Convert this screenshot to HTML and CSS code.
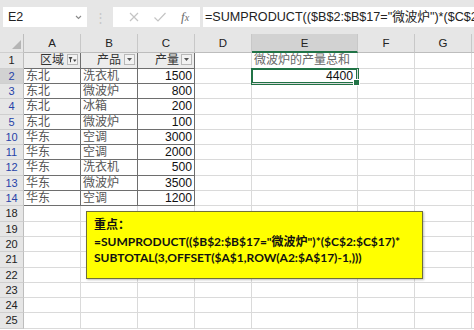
FILE: index.html
```html
<!DOCTYPE html>
<html lang="zh">
<head>
  <meta charset="UTF-8">
  <title>SUMPRODUCT</title>
  <link rel="stylesheet" href="styles.css">
</head>
<body>

  <div class="app">
    <!-- formula bar -->
    <div class="formula-bar">
      <div class="name-box">
        <span>E2</span>
        <svg class="caret" width="7" height="5" viewBox="0 0 7 5"><path d="M1 1 L3.5 3.5 L6 1" fill="none" stroke="#8a8a8a" stroke-width="1.1"/></svg>
      </div>
      <div class="dots">⋮</div>
      <div class="fx-buttons">
        <svg width="12" height="12" viewBox="0 0 12 12"><path d="M2 2 L10 10 M10 2 L2 10" stroke="#c4c4c4" stroke-width="1.2"/></svg>
        <svg width="14" height="12" viewBox="0 0 14 12"><path d="M1.5 6.5 L5 10 L12.5 2" fill="none" stroke="#c4c4c4" stroke-width="1.2"/></svg>
        <span class="fx"><i>f</i><i class="x">x</i></span>
      </div>
      <div class="formula">=SUMPRODUCT(($B$2:$B$17="微波炉")*($C$2:$C$17)*SUBTOTAL(3,OFFSET($A$1,ROW(A2:$A$17)-1,)))</div>
    </div>

    <!-- sheet -->
    <div class="sheet">
      <div class="row heads">
        <div class="rh corner"><svg width="9" height="9" viewBox="0 0 9 9"><path d="M9 0 L9 9 L0 9 Z" fill="#b5b5b5"/></svg></div>
        <div class="c">A</div>
        <div class="c">B</div>
        <div class="c">C</div>
        <div class="c">D</div>
        <div class="c wide active">E</div>
        <div class="c">F</div>
        <div class="c">G</div>
        <div class="c rest"></div>
      </div>

      <div class="row">
        <div class="rh">1</div>
        <div class="c tb th center">区域<span class="drop on"><svg width="9" height="8" viewBox="0 0 9 8"><path d="M0.5 1 L4.5 1 L3 3.5 L3 6.5 L2 6 L2 3.5 Z" fill="#444"/><path d="M5 3.5 L8.5 3.5 L6.75 6 Z" fill="#444"/></svg></span></div>
        <div class="c tb th center">产品<span class="drop"><svg width="5" height="3" viewBox="0 0 5 3"><path d="M0 0 L5 0 L2.5 3 Z" fill="#555"/></svg></span></div>
        <div class="c tb th right">产量<span class="drop"><svg width="5" height="3" viewBox="0 0 5 3"><path d="M0 0 L5 0 L2.5 3 Z" fill="#555"/></svg></span></div>
        <div class="c"></div>
        <div class="c wide note-title">微波炉的产量总和</div>
        <div class="c"></div>
        <div class="c"></div>
        <div class="c rest"></div>
      </div>

      <div class="row">
        <div class="rh hit active-row">2</div>
        <div class="c tb">东北</div>
        <div class="c tb">洗衣机</div>
        <div class="c tb num">1500</div>
        <div class="c"></div>
        <div class="c wide num sel">4400</div>
        <div class="c"></div>
        <div class="c"></div>
        <div class="c rest"></div>
      </div>

      <div class="row">
        <div class="rh hit">3</div>
        <div class="c tb">东北</div>
        <div class="c tb">微波炉</div>
        <div class="c tb num">800</div>
        <div class="c"></div><div class="c wide"></div><div class="c"></div><div class="c"></div><div class="c rest"></div>
      </div>

      <div class="row">
        <div class="rh hit">4</div>
        <div class="c tb">东北</div>
        <div class="c tb">冰箱</div>
        <div class="c tb num">200</div>
        <div class="c"></div><div class="c wide"></div><div class="c"></div><div class="c"></div><div class="c rest"></div>
      </div>

      <div class="row">
        <div class="rh hit">5</div>
        <div class="c tb">东北</div>
        <div class="c tb">微波炉</div>
        <div class="c tb num">100</div>
        <div class="c"></div><div class="c wide"></div><div class="c"></div><div class="c"></div><div class="c rest"></div>
      </div>

      <div class="row">
        <div class="rh hit">10</div>
        <div class="c tb">华东</div>
        <div class="c tb">空调</div>
        <div class="c tb num">3000</div>
        <div class="c"></div><div class="c wide"></div><div class="c"></div><div class="c"></div><div class="c rest"></div>
      </div>

      <div class="row">
        <div class="rh hit">11</div>
        <div class="c tb">华东</div>
        <div class="c tb">空调</div>
        <div class="c tb num">2000</div>
        <div class="c"></div><div class="c wide"></div><div class="c"></div><div class="c"></div><div class="c rest"></div>
      </div>

      <div class="row">
        <div class="rh hit">12</div>
        <div class="c tb">华东</div>
        <div class="c tb">洗衣机</div>
        <div class="c tb num">500</div>
        <div class="c"></div><div class="c wide"></div><div class="c"></div><div class="c"></div><div class="c rest"></div>
      </div>

      <div class="row">
        <div class="rh hit">13</div>
        <div class="c tb">华东</div>
        <div class="c tb">微波炉</div>
        <div class="c tb num">3500</div>
        <div class="c"></div><div class="c wide"></div><div class="c"></div><div class="c"></div><div class="c rest"></div>
      </div>

      <div class="row">
        <div class="rh hit">14</div>
        <div class="c tb">华东</div>
        <div class="c tb">空调</div>
        <div class="c tb num">1200</div>
        <div class="c"></div><div class="c wide"></div><div class="c"></div><div class="c"></div><div class="c rest"></div>
      </div>

      <div class="row"><div class="rh">18</div><div class="c"></div><div class="c"></div><div class="c"></div><div class="c"></div><div class="c wide"></div><div class="c"></div><div class="c"></div><div class="c rest"></div></div>
      <div class="row"><div class="rh">19</div><div class="c"></div><div class="c"></div><div class="c"></div><div class="c"></div><div class="c wide"></div><div class="c"></div><div class="c"></div><div class="c rest"></div></div>
      <div class="row"><div class="rh">20</div><div class="c"></div><div class="c"></div><div class="c"></div><div class="c"></div><div class="c wide"></div><div class="c"></div><div class="c"></div><div class="c rest"></div></div>
      <div class="row"><div class="rh">21</div><div class="c"></div><div class="c"></div><div class="c"></div><div class="c"></div><div class="c wide"></div><div class="c"></div><div class="c"></div><div class="c rest"></div></div>
      <div class="row"><div class="rh">22</div><div class="c"></div><div class="c"></div><div class="c"></div><div class="c"></div><div class="c wide"></div><div class="c"></div><div class="c"></div><div class="c rest"></div></div>
      <div class="row"><div class="rh">23</div><div class="c"></div><div class="c"></div><div class="c"></div><div class="c"></div><div class="c wide"></div><div class="c"></div><div class="c"></div><div class="c rest"></div></div>
      <div class="row"><div class="rh">24</div><div class="c"></div><div class="c"></div><div class="c"></div><div class="c"></div><div class="c wide"></div><div class="c"></div><div class="c"></div><div class="c rest"></div></div>
      <div class="row"><div class="rh">25</div><div class="c"></div><div class="c"></div><div class="c"></div><div class="c"></div><div class="c wide"></div><div class="c"></div><div class="c"></div><div class="c rest"></div></div>

      <!-- text box over the cells -->
      <div class="callout">
        <div>重点：</div>
        <div>=SUMPRODUCT(($B$2:$B$17="微波炉")*($C$2:$C$17)*</div>
        <div>SUBTOTAL(3,OFFSET($A$1,ROW(A2:$A$17)-1,)))</div>
      </div>
    </div>
  </div>

</body>
</html>
```

FILE: styles.css
```css
body {
  margin: 0;
  background: #ffffff;
  font-family: 'Liberation Sans', 'Noto Sans CJK SC', sans-serif;
  overflow: hidden;
}

.app {
  width: 474px;
  height: 330px;
  overflow: hidden;
}

/* formula bar */
.formula-bar {
  display: flex;
  align-items: center;
  height: 34px;
  padding: 0 0 0 3px;
  background: #e6e6e6;
  box-sizing: border-box;
}

.name-box {
  width: 84px;
  height: 20px;
  background: white;
  display: flex;
  align-items: center;
  justify-content: space-between;
  padding: 0 5px 0 5px;
  box-sizing: border-box;
  font-size: 12.5px;
  color: #222;
}

.dots {
  width: 26px;
  text-align: center;
  color: #c8c8c8;
  font-size: 13px;
}

.fx-buttons {
  width: 87px;
  height: 20px;
  background: white;
  display: flex;
  align-items: center;
  justify-content: space-around;
  padding: 0 4px 0 8px;
  box-sizing: border-box;
}

.fx {
  font-family: 'Liberation Serif', serif;
  font-size: 13px;
  color: #6b6b6b;
}

.fx .x {
  font-size: 10px;
}

.formula {
  flex: 1;
  min-width: 0;
  height: 20px;
  margin-left: 3px;
  background: white;
  padding-left: 2px;
  line-height: 20px;
  white-space: nowrap;
  overflow: hidden;
  font-size: 12.6px;
  color: #222;
}

/* sheet */
.sheet {
  position: relative;
}

.row {
  display: flex;
  height: 15.3px;
}

.row.heads {
  height: 19.4px;
  background: #e6e6e6;
}

.c, .rh {
  flex: none;
  box-sizing: border-box;
  border-right: 1px solid #dadada;
  border-bottom: 1px solid #dadada;
  font-family: 'Liberation Sans', 'Noto Sans CJK SC', sans-serif;
  font-size: 12px;
  line-height: 14px;
  padding: 0 2px;
  white-space: nowrap;
  color: #555;
}

.c { width: 57px; }
.c.wide { width: 106px; }
.c.rest { flex: 1; }

.rh {
  width: 24px;
  background: #e6e6e6;
  border-right: 1px solid #bdbdbd;
  border-bottom: 1px solid #cfcfcf;
  text-align: center;
  font-size: 11px;
  color: #222;
  padding: 0;
}

.rh.hit { color: #2743a8; }
.rh.active-row { background: #d2d2d2; }

.heads .c {
  background: #e6e6e6;
  border-right: 1px solid #c8c8c8;
  border-bottom: 1px solid #bdbdbd;
  text-align: center;
  font-size: 11.5px;
  line-height: 18px;
  color: #222;
}

.heads .c.active {
  background: #d2d2d2;
  border-bottom: 2px solid #217346;
}

.heads .corner {
  display: flex;
  align-items: flex-end;
  justify-content: flex-end;
  padding: 0 2px 3px 0;
}

/* table A1:C14 */
.c.tb {
  border-right-color: #6e6e6e;
  border-bottom-color: #6e6e6e;
}

.c.th {
  position: relative;
  background: #ececec;
  color: #333;
}

.c.th.right {
  padding-right: 15px;
}

.center { text-align: center; }
.right { text-align: right; }

.drop {
  position: absolute;
  right: 2px;
  top: 1px;
  width: 11px;
  height: 11px;
  box-sizing: border-box;
  border: 1px solid #b8b8b8;
  background: #f2f2f2;
  display: flex;
  align-items: center;
  justify-content: center;
}

.num {
  text-align: right;
  font-size: 12.2px;
  color: #111;
}

.note-title {
  color: #666;
}

.c.sel {
  position: relative;
  box-shadow: 0 0 0 1px #217346, inset 0 0 0 1px #217346;
  padding-right: 4px;
}

.c.sel::after {
  content: "";
  position: absolute;
  right: -3px;
  bottom: -3px;
  width: 5px;
  height: 5px;
  background: #217346;
  border: 1px solid white;
}

/* yellow note box */
.callout {
  position: absolute;
  left: 86px;
  top: 177px;
  width: 337px;
  height: 68px;
  box-sizing: border-box;
  background: #ffff00;
  border: 1.5px solid #6f6f3a;
  box-shadow: 1px 1px 2px rgba(0,0,0,0.25);
  padding: 5px 0 0 7px;
  font-family: 'Lato', 'Noto Sans CJK SC', sans-serif;
  font-weight: bold;
  font-size: 12px;
  line-height: 16.5px;
  color: #111;
  white-space: nowrap;
}
```
